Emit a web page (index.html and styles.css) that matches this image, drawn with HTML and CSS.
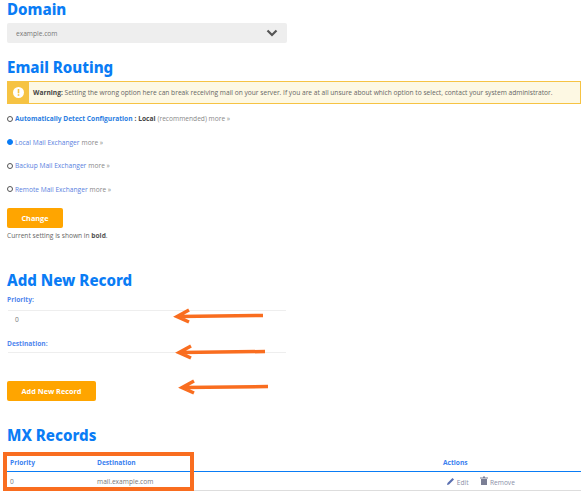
FILE: index.html
```html
<!DOCTYPE html>
<html>
<head>
	<title>MX Entry</title>
	<link rel="stylesheet" href="styles.css">
</head>
<body>

<div class="page">
	<h2 class="first">Domain</h2>
	<div class="select"><span>example.com</span>
		<svg class="chev" width="12" height="8" viewBox="0 0 12 8"><path d="M1.500 1.500 6 6l4.500-4.500" fill="none" stroke="#555" stroke-width="2.200"/></svg>
	</div>

	<h2 class="routing">Email Routing</h2>
	<div class="warning">
		<div class="warnicon"><svg width="11" height="11" viewBox="0 0 11 11"><circle cx="5.500" cy="5.500" r="5.500" fill="#fff"/><rect x="4.700" y="2" width="1.600" height="4.300" fill="#f6c343"/><rect x="4.700" y="7.200" width="1.600" height="1.600" fill="#f6c343"/></svg></div>
		<div class="warntext"><b>Warning:</b> Setting the wrong option here can break receiving mail on your server. If you are at all unsure about which option to select, contact your system administrator.</div>
	</div>

	<div class="options">
		<div class="option"><span class="radio"></span><b class="blue">Automatically Detect Configuration</b> <b>: Local</b> <span class="grey">(recommended) more »</span></div>
		<div class="option"><span class="radio on"></span><span class="link">Local Mail Exchanger</span> <span class="grey">more »</span></div>
		<div class="option"><span class="radio"></span><span class="link">Backup Mail Exchanger</span> <span class="grey">more »</span></div>
		<div class="option"><span class="radio"></span><span class="link">Remote Mail Exchanger</span> <span class="grey">more »</span></div>
	</div>

	<div class="btn change">Change</div>
	<p class="note">Current setting is shown in <b>bold</b>.</p>

	<h2 class="addnew">Add New Record</h2>
	<label class="lbl">Priority:</label>
	<div class="field">0</div>
	<label class="lbl">Destination:</label>
	<div class="field empty"></div>
	<div class="btn add">Add New Record</div>

	<h2 class="mx">MX Records</h2>
	<table class="records">
		<tr><th class="c1">Priority</th><th class="c2">Destination</th><th>Actions</th></tr>
		<tr>
			<td>0</td><td>mail.example.com</td>
			<td class="actions">
				<svg width="8" height="8" viewBox="0 0 8 8"><path d="M0 8l.5-2L5.500 1 7 2.500 2 7.500z" fill="#5a6fb0"/></svg> Edit
				<svg class="trash" width="8" height="9" viewBox="0 0 8 9"><path d="M0 1.500h8V2.500H0zM3 .5h2v1H3zM1 3h6v6H1z" fill="#7b7f95"/></svg> Remove
			</td>
		</tr>
	</table>
</div>

<div class="redbox"></div>
<svg class="arrow a1" width="96" height="20" viewBox="0 0 96 20"><path d="M90 9.500 6 10.500M16 4 4 10.500 16 16" fill="none" stroke="#f96d1f" stroke-width="3.500"/></svg>
<svg class="arrow a2" width="96" height="20" viewBox="0 0 96 20"><path d="M90 9.500 6 10.500M16 4 4 10.500 16 16" fill="none" stroke="#f96d1f" stroke-width="3.500"/></svg>
<svg class="arrow a3" width="96" height="20" viewBox="0 0 96 20"><path d="M90 9.500 6 10.500M16 4 4 10.500 16 16" fill="none" stroke="#f96d1f" stroke-width="3.500"/></svg>

</body>
</html>
```

FILE: styles.css
```css
body {
	margin:0;
	background-color:white;
	font-family:"Open Sans", sans-serif;
	font-size:6.630px;
	color:#666;
	overflow:hidden;}

.page {
	padding:0 7px;}

h2 {
	margin:0;
	font-family:"Noto Sans", sans-serif;
	font-size:15.100px;
	line-height:20px;
	font-weight:800;
	color:#0a7cf5;}

.first {
	line-height:18px;
	margin-bottom:5px;}

.select {
	width:280px;
	height:20px;
	box-sizing:border-box;
	padding:0 9px;
	background-color:#eee;
	border-radius:2px;
	display:flex;
	justify-content:space-between;
	align-items:center;
	color:#777;}

.routing {
	margin-top:14px;
	margin-bottom:4px;}

.warning {
	height:23px;
	box-sizing:border-box;
	border:1px solid #f6c343;
	background-color:#fdf8e3;
	display:flex;
	align-items:center;}

.warnicon {
	width:21px;
	height:100%;
	background-color:#f6c343;
	display:flex;
	justify-content:center;
	align-items:center;}

.warntext {
	padding-left:4px;}

.warntext b {
	color:#444;}

.options {
	margin-top:3px;}

.option {
	height:23.500px;
	display:flex;
	align-items:center;
	gap:2px;
	white-space:pre;}

.radio {
	width:4px;
	height:4px;
	border:1px solid #555;
	border-radius:50%;}

.radio.on {
	background-color:#0a7cf5;
	border-color:#0a7cf5;}

.option b {
	color:#444;}

.option b.blue {
	color:#2a7de1;}

.link {
	color:#5a7fe0;}

.grey {
	color:#888;}

.btn {
	background-color:#ffa500;
	color:white;
	font-size:7.300px;
	font-weight:700;
	border-radius:2px;
	display:flex;
	justify-content:center;
	align-items:center;}

.change {
	width:56px;
	height:20px;
	margin-top:7px;}

.note {
	margin:3px 0 0;
	line-height:10px;}

.note b {
	color:#555;}

.addnew {
	margin-top:29px;}

.lbl {
	display:block;
	margin-top:5px;
	line-height:10px;
	font-weight:700;
	color:#4f86ee;}

.field {
	width:278px;
	height:22px;
	margin-left:1px;
	margin-top:5px;
	margin-bottom:7px;
	border-top:1px solid #eee;
	padding-left:7px;
	line-height:17px;
	box-sizing:border-box;
	color:#777;}

.field.empty {
	height:29px;
	margin-top:3px;
	margin-bottom:0;}

.add {
	width:89px;
	height:20px;}

.mx {
	margin-top:24px;}

.records {
	width:574px;
	margin-top:8px;
	border-collapse:collapse;}

.records th {
	text-align:left;
	height:18px;
	padding:0 3px;
	border-bottom:1px solid #0a7cf5;
	color:#3a7ff0;}

.records td {
	height:18px;
	padding:0 3px;
	border-bottom:1px solid #ddd;
	color:#777;}

.records .c1 {
	width:81px;}

.records .c2 {
	width:340px;}

.records .actions {
	padding-left:7px;
	color:#8a8fa8;}

.trash {
	margin-left:10px;}

.redbox {
	position:absolute;
	left:3px;
	top:452px;
	width:183px;
	height:31px;
	border:4px solid #f96d1f;}

.arrow {
	position:absolute;}

.a1 {
	left:173px;
	top:306px;}

.a2 {
	left:175px;
	top:342px;}

.a3 {
	left:178px;
	top:377px;}
```
